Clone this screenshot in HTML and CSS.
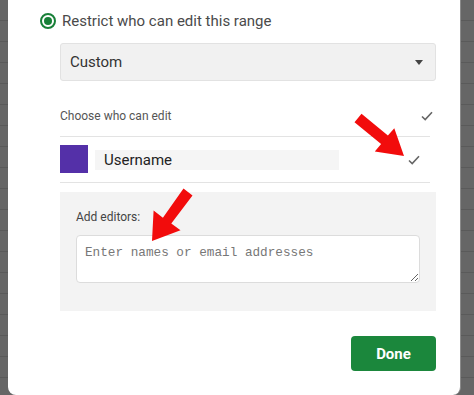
FILE: index.html
```html
<!DOCTYPE html>
<html lang="en">
<head>
  <meta charset="UTF-8">
  <meta name="viewport" content="width=device-width, initial-scale=1">
  <title>Restrict range</title>
  <link rel="stylesheet" href="styles.css">
</head>
<body>
  <div class="screen">
    <div class="dialog">
      <label class="radio-row">
        <span class="radio"></span>
        Restrict who can edit this range
      </label>

      <div class="select">
        <span>Custom</span>
        <span class="caret"></span>
      </div>

      <div class="choose-row">
        <span>Choose who can edit</span>
        <svg class="check" width="12" height="10" viewBox="0 0 12 10"><path d="M1 5.5 L4.2 8.5 L11 1.2" /></svg>
      </div>

      <div class="user-row">
        <span class="avatar"></span>
        <span class="user-name">Username</span>
        <svg class="check check-user" width="12" height="10" viewBox="0 0 12 10"><path d="M1 5.5 L4.2 8.5 L11 1.2" /></svg>
      </div>

      <div class="editors-panel">
        <div class="panel-label">Add editors:</div>
        <textarea placeholder="Enter names or email addresses"></textarea>
      </div>

      <div class="actions">
        <button class="done">Done</button>
      </div>
    </div>

    <!-- red arrows drawn over the dialog -->
    <svg class="arrows" width="474" height="395" viewBox="0 0 474 395">
      <polygon points="354.5,122.3 361.5,113.7 387.9,135.6 394.3,128.2 404,156 374.8,151.6 381.1,143.9" />
      <polygon points="183.5,188.6 192.5,195.4 171.3,223.6 180.5,230.3 152,241 153.6,210.5 162.9,217.7" />
    </svg>
  </div>
</body>
</html>
```

FILE: styles.css
```css
body {
  margin: 0;
  font-family: Roboto, "Liberation Sans", sans-serif;
  background-color: #6a6a6a;
}
.screen {
  position: relative;
  display: flex;
  height: 395px;
  overflow: hidden;
  padding-left: 8px;
  background-color: #666;
  background-image: repeating-linear-gradient(to bottom, transparent 0, transparent 20px, #5a5a5a 20px, #5a5a5a 21px);
}
.dialog {
  width: 453px;
  height: 395px;
  box-sizing: border-box;
  padding: 11px 24px 0 52px;
  background-color: #fff;
  border-radius: 0 0 8px 8px;
  border-right: 1px solid #8a8a8a;
}
.radio-row {
  display: flex;
  align-items: center;
  gap: 6px;
  height: 20px;
  margin-left: -20px;
  font-size: 15px;
  color: #4a4a4a;
}
.radio {
  width: 12px;
  height: 12px;
  border: 2px solid #188038;
  border-radius: 50%;
  position: relative;
}
.radio::after {
  content: "";
  position: absolute;
  left: 2px;
  top: 2px;
  width: 8px;
  height: 8px;
  border-radius: 50%;
  background-color: #188038;
}
.select {
  display: flex;
  align-items: center;
  justify-content: space-between;
  height: 38px;
  box-sizing: border-box;
  margin-top: 12px;
  padding: 0 12px 0 9px;
  background-color: #f1f1f1;
  border: 1px solid #e2e2e2;
  border-radius: 3px;
  font-size: 15px;
  color: #333;
}
.caret {
  width: 0;
  height: 0;
  border-left: 4.5px solid transparent;
  border-right: 4.5px solid transparent;
  border-top: 5px solid #444;
}
.check path {
  fill: none;
  stroke: #666;
  stroke-width: 1.6;
}
.choose-row {
  display: flex;
  align-items: center;
  justify-content: space-between;
  width: 370px;
  padding: 27px 0 12px;
  border-bottom: 1px solid #e3e3e3;
  font-size: 12px;
  line-height: 16px;
  color: #555;
}
.choose-row .check {
  margin-right: -3px;
}
.user-row {
  display: flex;
  align-items: center;
  width: 370px;
  padding: 8px 0 9px;
  border-bottom: 1px solid #e3e3e3;
}
.avatar {
  width: 28px;
  height: 28px;
  background-color: #5430a8;
}
.user-name {
  width: 235px;
  height: 20px;
  margin: 2px 0 0 7px;
  padding-left: 9px;
  background-color: #f5f5f5;
  font-size: 15px;
  line-height: 20px;
  color: #222;
}
.check-user {
  margin: 2px 10px 0 auto;
}
.editors-panel {
  width: 376px;
  box-sizing: border-box;
  margin-top: 9px;
  padding: 18px 16px 28px;
  background-color: #f3f3f3;
}
.panel-label {
  font-size: 12px;
  line-height: 14px;
  color: #444;
}
textarea {
  display: block;
  width: 344px;
  height: 48px;
  box-sizing: border-box;
  margin-top: 11px;
  padding: 9px 8px 5px;
  border: 1px solid #dcdcdc;
  border-radius: 4px;
  background-color: #fff;
  font-family: "Liberation Mono", monospace;
  font-size: 12.7px;
}
textarea::placeholder {
  color: #777;
}
.actions {
  display: flex;
  justify-content: flex-end;
  margin-top: 25px;
}
.done {
  width: 85px;
  height: 35px;
  border: none;
  border-radius: 4px;
  background-color: #1b873c;
  color: #fff;
  font-family: Roboto, "Liberation Sans", sans-serif;
  font-size: 15px;
  font-weight: bold;
}
.arrows {
  position: absolute;
  left: 0;
  top: 0;
}
.arrows polygon {
  fill: #f20c0c;
}
```
